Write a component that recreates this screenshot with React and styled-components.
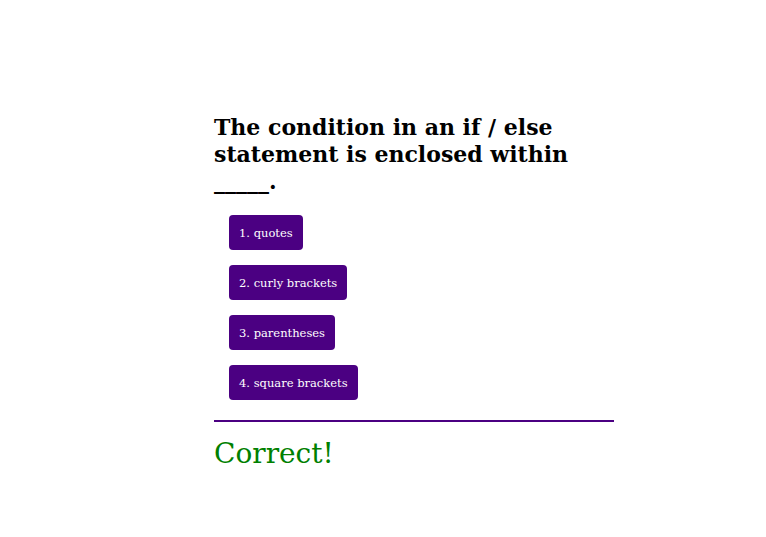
import React from 'react'
import styled, { createGlobalStyle } from 'styled-components'

const GlobalStyle = createGlobalStyle`
  body {
    margin: 0;
    background: #fff;
    font-family: Georgia, "DejaVu Serif", serif;
  }
`;

const Page = styled.main`
  padding: 114px 0 0 214px;
`;

const Quiz = styled.section`
  width: 400px;
`;

const Question = styled.h2`
  margin: 0;
  font-size: 22px;
  line-height: 27px;
  font-weight: bold;
  color: #000;
`;

const Choices = styled.ol`
  list-style: none;
  margin: 20px 0 0;
  padding: 0 0 0 15px;
  display: flex;
  flex-direction: column;
  align-items: flex-start;
  gap: 15px;
`;

const Choice = styled.button`
  height: 35px;
  padding: 0 10px;
  border: none;
  border-radius: 4px;
  background: #4b0082;
  color: #fff;
  font-family: inherit;
  font-size: 11.5px;
  cursor: pointer;
`;

const Divider = styled.hr`
  margin: 20px 0 0;
  border: none;
  height: 2px;
  background: #4b0082;
`;

const Result = styled.p`
  margin: 16px 0 0;
  font-size: 28px;
  line-height: 32px;
  color: #008000;
`;

const choices = ['quotes', 'curly brackets', 'parentheses', 'square brackets']

const App = () => (
  <Page>
    <GlobalStyle />
    <Quiz>
      <Question>The condition in an if / else statement is enclosed within _____.</Question>
      <Choices>
        {choices.map((c, i) => (
          <li key={c}>
            <Choice>{i + 1}. {c}</Choice>
          </li>
        ))}
      </Choices>
      <Divider />
      <Result>Correct!</Result>
    </Quiz>
  </Page>
)

export default App
